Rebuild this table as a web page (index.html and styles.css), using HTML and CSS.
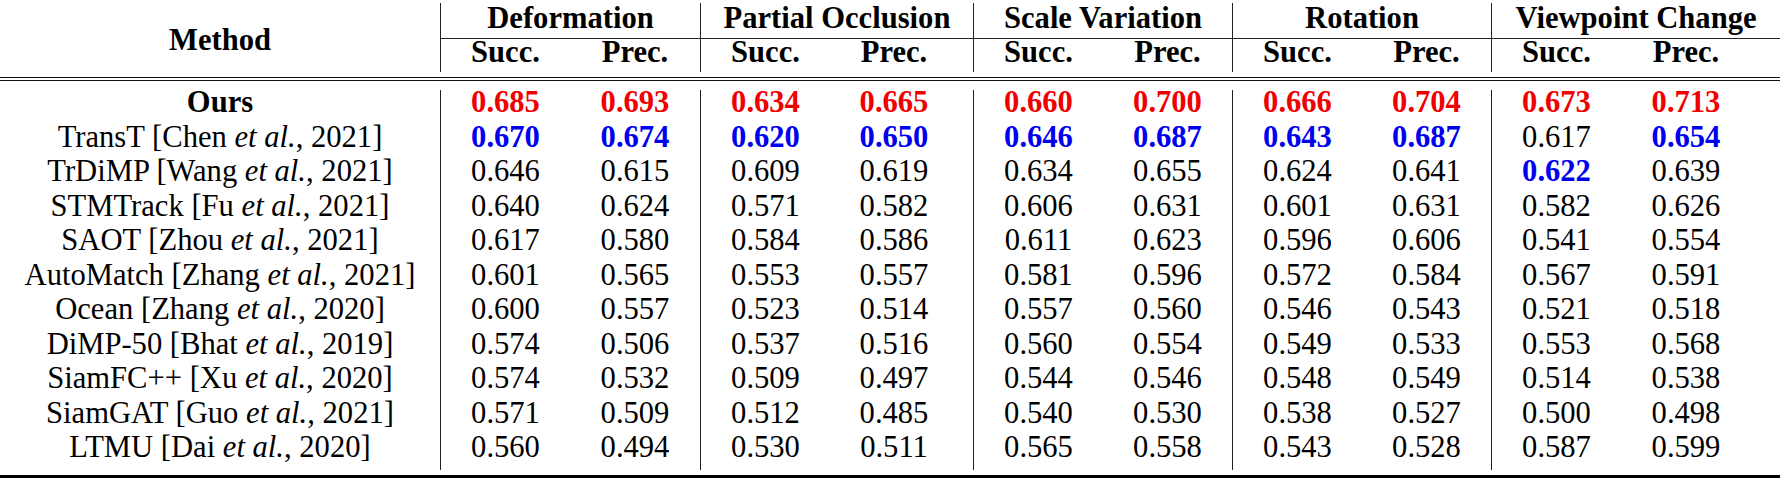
FILE: index.html
```html
<!DOCTYPE html>
<html lang="en">
<head>
<meta charset="utf-8">
<title>Attribute comparison</title>
<link rel="stylesheet" href="styles.css">
</head>
<body>
<div class="table">
  <div class="head">
    <div class="method-h">Method</div>
    <div class="grp">Deformation</div>
    <div class="grp">Partial Occlusion</div>
    <div class="grp">Scale Variation</div>
    <div class="grp">Rotation</div>
    <div class="grp">Viewpoint Change</div>
    <div class="sub s">Succ.</div><div class="sub">Prec.</div>
    <div class="sub s">Succ.</div><div class="sub pp">Prec.</div>
    <div class="sub s">Succ.</div><div class="sub">Prec.</div>
    <div class="sub s">Succ.</div><div class="sub">Prec.</div>
    <div class="sub s">Succ.</div><div class="sub vp">Prec.</div>
  </div>
  <div class="double-rule"></div>
  <div class="body">
    <div class="row">
      <span class="b">Ours</span>
      <span class="b red">0.685</span><span class="b red">0.693</span>
      <span class="b red">0.634</span><span class="b red">0.665</span>
      <span class="b red">0.660</span><span class="b red">0.700</span>
      <span class="b red">0.666</span><span class="b red">0.704</span>
      <span class="b red">0.673</span><span class="b red">0.713</span>
    </div>
    <div class="row">
      <span>TransT [Chen <i>et al.</i>, 2021]</span>
      <span class="b blue">0.670</span><span class="b blue">0.674</span>
      <span class="b blue">0.620</span><span class="b blue">0.650</span>
      <span class="b blue">0.646</span><span class="b blue">0.687</span>
      <span class="b blue">0.643</span><span class="b blue">0.687</span>
      <span>0.617</span><span class="b blue">0.654</span>
    </div>
    <div class="row">
      <span>TrDiMP [Wang <i>et al.</i>, 2021]</span>
      <span>0.646</span><span>0.615</span>
      <span>0.609</span><span>0.619</span>
      <span>0.634</span><span>0.655</span>
      <span>0.624</span><span>0.641</span>
      <span class="b blue">0.622</span><span>0.639</span>
    </div>
    <div class="row">
      <span>STMTrack [Fu <i>et al.</i>, 2021]</span>
      <span>0.640</span><span>0.624</span>
      <span>0.571</span><span>0.582</span>
      <span>0.606</span><span>0.631</span>
      <span>0.601</span><span>0.631</span>
      <span>0.582</span><span>0.626</span>
    </div>
    <div class="row">
      <span>SAOT [Zhou <i>et al.</i>, 2021]</span>
      <span>0.617</span><span>0.580</span>
      <span>0.584</span><span>0.586</span>
      <span>0.611</span><span>0.623</span>
      <span>0.596</span><span>0.606</span>
      <span>0.541</span><span>0.554</span>
    </div>
    <div class="row">
      <span>AutoMatch [Zhang <i>et al.</i>, 2021]</span>
      <span>0.601</span><span>0.565</span>
      <span>0.553</span><span>0.557</span>
      <span>0.581</span><span>0.596</span>
      <span>0.572</span><span>0.584</span>
      <span>0.567</span><span>0.591</span>
    </div>
    <div class="row">
      <span>Ocean [Zhang <i>et al.</i>, 2020]</span>
      <span>0.600</span><span>0.557</span>
      <span>0.523</span><span>0.514</span>
      <span>0.557</span><span>0.560</span>
      <span>0.546</span><span>0.543</span>
      <span>0.521</span><span>0.518</span>
    </div>
    <div class="row">
      <span>DiMP-50 [Bhat <i>et al.</i>, 2019]</span>
      <span>0.574</span><span>0.506</span>
      <span>0.537</span><span>0.516</span>
      <span>0.560</span><span>0.554</span>
      <span>0.549</span><span>0.533</span>
      <span>0.553</span><span>0.568</span>
    </div>
    <div class="row">
      <span>SiamFC++ [Xu <i>et al.</i>, 2020]</span>
      <span>0.574</span><span>0.532</span>
      <span>0.509</span><span>0.497</span>
      <span>0.544</span><span>0.546</span>
      <span>0.548</span><span>0.549</span>
      <span>0.514</span><span>0.538</span>
    </div>
    <div class="row">
      <span>SiamGAT [Guo <i>et al.</i>, 2021]</span>
      <span>0.571</span><span>0.509</span>
      <span>0.512</span><span>0.485</span>
      <span>0.540</span><span>0.530</span>
      <span>0.538</span><span>0.527</span>
      <span>0.500</span><span>0.498</span>
    </div>
    <div class="row">
      <span>LTMU [Dai <i>et al.</i>, 2020]</span>
      <span>0.560</span><span>0.494</span>
      <span>0.530</span><span>0.511</span>
      <span>0.565</span><span>0.558</span>
      <span>0.543</span><span>0.528</span>
      <span>0.587</span><span>0.599</span>
    </div>
  </div>
  <div class="bottom-rule"></div>
</div>
</body>
</html>
```
FILE: styles.css
```css
html, body {
  margin: 0;
  padding: 0;
  background: #ffffff;
}

body {
  padding-top: 3px;
  font-family: "Liberation Serif", "Times New Roman", serif;
  font-size: 30.6px;
  color: #000;
}

.table {
  width: 1780px;
}

.head,
.row {
  display: grid;
  grid-template-columns: 440px 130px 130px 130px 143px 130px 129px 130px 129px 130px 159px;
}

.head {
  grid-template-rows: 36px 33px;
  font-weight: bold;
}

.method-h {
  grid-row: 1 / span 2;
  grid-column: 1;
  display: flex;
  align-items: center;
  justify-content: center;
  line-height: 30px;
  padding-top: 4px;
}

.grp {
  grid-column: span 2;
  text-align: center;
  line-height: 30px;
  padding-bottom: 5px;
  border-left: 1px solid #222;
  border-bottom: 1px solid #222;
}

.grp:nth-child(3) { padding-right: 0; }

.sub {
  text-align: center;
  line-height: 26px;
}

.sub.s {
  border-left: 1px solid #222;
}

.sub.pp { padding-right: 15px; }
.sub.vp { padding-right: 29px; }

.double-rule {
  margin: 5px 0 9px;
  height: 2px;
  border-top: 1px solid #111;
  border-bottom: 1px solid #111;
}

.row {
  height: 34.5px;
}

.row > span {
  text-align: center;
  line-height: 25px;
  white-space: nowrap;
}

.row > span:nth-child(2n) {
  border-left: 1px solid #222;
}

.row > span:nth-child(5) { padding-right: 15px; }
.row > span:nth-child(11) { padding-right: 29px; }

.b { font-weight: bold; }
.red { color: #f00000; }
.blue { color: #0000f0; }

.bottom-rule {
  margin-top: 5.5px;
  height: 3px;
  background: #000;
}
```
